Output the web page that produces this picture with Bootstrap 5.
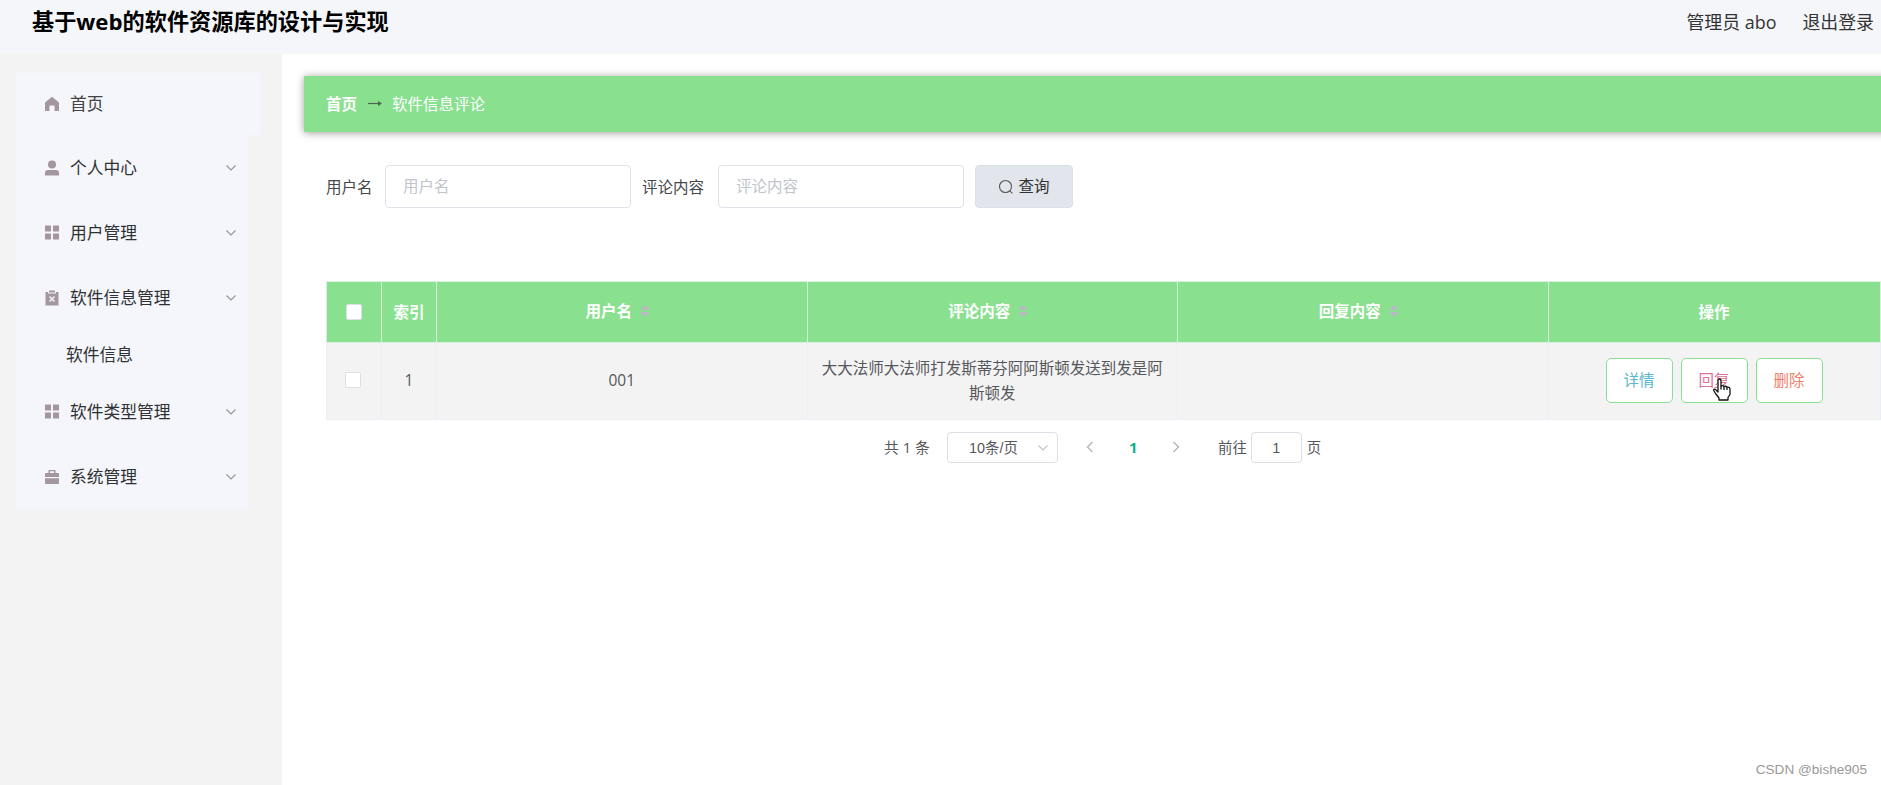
<!DOCTYPE html>
<html lang="zh-CN">
<head>
<meta charset="utf-8">
<meta name="viewport" content="width=device-width, initial-scale=1">
<title>基于web的软件资源库的设计与实现</title>
<link rel="stylesheet" href="https://cdn.jsdelivr.net/npm/bootstrap@5.3.0/dist/css/bootstrap.min.css">
<style>
body{font-family:"Open Sans","Noto Sans CJK SC",sans-serif;font-size:15.5px;line-height:24px;color:#55575b;overflow:hidden;height:785px;background:#fff}
.topbar{height:54px;background:#f4f6fa;padding:0 7px 11px 32px;color:#333}
.topbar h1{font-size:22.2px;line-height:32px;color:#000;font-weight:700}
.topbar .links{font-size:17.9px;gap:26px}
.side{width:282px;height:731px;background:#f3f3f3;padding:19px 0 0 16px}
.menu{width:232px;background:#f4f6fb;font-size:16.75px;color:#303133}
.menu li{height:65px;padding:0 11px 0 28px}
.menu li.home{height:62px;width:244px;background:#f4f6fb;padding-bottom:1px;color:#444}
.menu li.child{height:49px;padding-left:50px}
.menu svg.ico{width:16px;height:16px;fill:#a3969f;margin-right:10px}
.chev{fill:none;stroke:#909399;stroke-width:1.1}
.main{min-width:0;padding:22px 0 0 22px}
.crumbs{height:56px;background:#89e08f;box-shadow:0 1px 8px rgba(0,0,0,.38);padding:0 22px 1px;color:#fff;margin-right:-10px}
.crumbs .arrow{margin:0 7px 0 8px}
.inner{padding:33px 1px 0 22px}
.search{color:#44464a}
.label-user{width:59px}
.label-text{width:76px;margin-left:11px}
.field{width:246px;height:43px;border:1px solid #dfe2e8;border-radius:4px;padding:0 17px 2px;font-size:15.5px}
.field::placeholder{color:#c0c4cc}
.query{width:98px;height:43px;background:#e2e5eb;border:1px solid #dcdfe6;border-radius:4px;font-size:15.5px;color:#333;padding:0;margin-left:11px}
.query:hover{background:#e2e5eb}
.grid-table{table-layout:fixed;width:1554px;margin:73px 0 0;border-collapse:collapse;text-align:center}
.c-sm{width:55px}.c-lg{width:370.500px}.c-end{width:332px}
.grid-table th{background:#89e08f;color:#fff;height:61px;border:1px solid #dcf0e2;padding:0;font-weight:700;vertical-align:middle}
.grid-table td{background:#f3f3f4;height:77px;border:1px solid #ebeef5;padding:0 11px 1px;line-height:25px;vertical-align:middle}
.srt{padding:0 8px 3px 0}
.tri{margin-left:8px}
.tick{width:16px;height:16px;border:1px solid #dcdfe6;border-radius:2px;background:#fff;margin-bottom:3px}
td .tick{margin-right:3px}
.acts{gap:8px}
.act,.act:hover{width:67px;height:45px;border:1px solid #89e08f;border-radius:5px;background:#fff;font-size:15.5px;padding:0}
.act-view,.act-view:hover{color:#5bb7cd}
.act-reply,.act-reply:hover{color:#e0709a}
.act-del,.act-del:hover{color:#ee7f6d}
.pager{font-size:14.4px;padding-left:558px;margin-top:12px;height:31px}
.pager .total{width:63px;padding-bottom:2px;font-size:14.8px}
.pager svg.arr{fill:none;stroke:#b4b8c0;stroke-width:1.5}
.box{height:31px;border:1px solid #dcdfe6;border-radius:4px;font-family:"Liberation Sans","Noto Sans CJK SC",sans-serif}
.box-size{width:111px;padding:0 8px 0 21px}
.box-size svg{fill:none;stroke:#c0c4cc;stroke-width:1.2}
.box-page{width:51px;margin:0 5px 0 4px}
.prev{margin-left:27px}
.cur{color:#13ae8c;width:10px;margin-left:34px;padding-bottom:2px;font-size:15px}
.next{margin-left:32px}
.goto{margin-left:37px}
.hand{left:1712px;top:378px}
.water{right:14px;bottom:3px;font:13.6px/24px "Liberation Sans",sans-serif;color:#999}
</style>
</head>
<body class="position-relative">
<header class="topbar d-flex justify-content-between align-items-center">
  <h1 class="m-0">基于web的软件资源库的设计与实现</h1>
  <div class="links d-flex"><span>管理员 abo</span><span>退出登录</span></div>
</header>
<div class="d-flex">
  <aside class="side flex-shrink-0">
    <ul class="menu list-unstyled m-0">
      <li class="home d-flex align-items-center"><svg class="ico" viewBox="0 0 16 16"><path d="M8 .800 15 6.500v8q0 .500-.500.500H10.500V9.500h-5V15h-4Q1 15 1 14.500v-8z"/></svg>首页</li>
      <li class="d-flex align-items-center"><svg class="ico" viewBox="0 0 16 16"><circle cx="8" cy="4.500" r="4"/><path d="M1 15.500v-2.500q0-3 3-3h8q3 0 3 3v2.500z"/></svg>个人中心<svg class="chev ms-auto" width="12" height="8" viewBox="0 0 12 8"><path d="m1.500 1.500 4.500 4.500 4.500-4.500"/></svg></li>
      <li class="d-flex align-items-center"><svg class="ico" viewBox="0 0 16 16"><path d="M1 .500h6v6H1zM9 .500h6v6H9zM1 8.500h6v6H1zM9 8.500h6v6H9z"/></svg>用户管理<svg class="chev ms-auto" width="12" height="8" viewBox="0 0 12 8"><path d="m1.500 1.500 4.500 4.500 4.500-4.500"/></svg></li>
      <li class="d-flex align-items-center"><svg class="ico" viewBox="0 0 16 16"><path d="M1.500 2H4v1.500h8V2h2.500v13.500h-13zM5 .500h6v2H5z"/><path d="m5.500 6.500 5 5m0-5-5 5" stroke="#f4f6fb" stroke-width="1.500"/></svg>软件信息管理<svg class="chev ms-auto" width="12" height="8" viewBox="0 0 12 8"><path d="m1.500 1.500 4.500 4.500 4.500-4.500"/></svg></li>
      <li class="child d-flex align-items-center">软件信息</li>
      <li class="d-flex align-items-center"><svg class="ico" viewBox="0 0 16 16"><path d="M1 .500h6v6H1zM9 .500h6v6H9zM1 8.500h6v6H1zM9 8.500h6v6H9z"/></svg>软件类型管理<svg class="chev ms-auto" width="12" height="8" viewBox="0 0 12 8"><path d="m1.500 1.500 4.500 4.500 4.500-4.500"/></svg></li>
      <li class="d-flex align-items-center"><svg class="ico" viewBox="0 0 16 16"><path d="M1 8V5q0-1 1-1h2.500V1h7v3H14q1 0 1 1v3zM6 2.300V4h4V2.300zM1 9.300h14V14q0 1-1 1H2q-1 0-1-1z" fill-rule="evenodd"/></svg>系统管理<svg class="chev ms-auto" width="12" height="8" viewBox="0 0 12 8"><path d="m1.500 1.500 4.500 4.500 4.500-4.500"/></svg></li>
    </ul>
  </aside>
  <main class="main flex-grow-1">
    <nav class="crumbs d-flex align-items-center"><b>首页</b><svg class="arrow" width="20" height="10" viewBox="0 0 20 10"><path d="M3 4.500h11" stroke="#4e6652" stroke-width="1.200"/><path d="m13 2 4 2.500-4 2.500z" fill="#4e6652"/></svg><span>软件信息评论</span></nav>
    <div class="inner">
      <form class="search d-flex align-items-center">
        <label class="label-user flex-shrink-0">用户名</label><input class="field form-control flex-shrink-0" placeholder="用户名">
        <label class="label-text flex-shrink-0">评论内容</label><input class="field form-control flex-shrink-0" placeholder="评论内容">
        <button type="button" class="query btn d-flex align-items-center justify-content-center"><svg class="me-1" width="16" height="16" viewBox="0 0 16 16" fill="none" stroke="#555" stroke-width="1.100"><circle cx="7.500" cy="7.500" r="6"/><path d="m11.800 11.800 2.500 2.500"/></svg>查询</button>
      </form>
      <table class="grid-table">
        <colgroup><col class="c-sm"><col class="c-sm"><col class="c-lg"><col class="c-lg"><col class="c-lg"><col class="c-end"></colgroup>
        <thead><tr>
          <th><span class="tick d-inline-block align-middle"></span></th><th>索引</th>
          <th><div class="srt d-flex align-items-center justify-content-center">用户名<svg class="tri" width="10" height="14" viewBox="0 0 10 14"><path d="M0 6 5 1l5 5zM0 8l5 5 5-5z" fill="#b9b9c4"/></svg></div></th>
          <th><div class="srt d-flex align-items-center justify-content-center">评论内容<svg class="tri" width="10" height="14" viewBox="0 0 10 14"><path d="M0 6 5 1l5 5zM0 8l5 5 5-5z" fill="#b9b9c4"/></svg></div></th>
          <th><div class="srt d-flex align-items-center justify-content-center">回复内容<svg class="tri" width="10" height="14" viewBox="0 0 10 14"><path d="M0 6 5 1l5 5zM0 8l5 5 5-5z" fill="#b9b9c4"/></svg></div></th>
          <th>操作</th>
        </tr></thead>
        <tbody><tr>
          <td><span class="tick d-inline-block align-middle"></span></td><td>1</td><td>001</td><td>大大法师大法师打发斯蒂芬阿阿斯顿发送到发是阿斯顿发</td><td></td>
          <td><div class="acts d-flex justify-content-center"><button class="act act-view btn">详情</button><button class="act act-reply btn">回复</button><button class="act act-del btn">删除</button></div></td>
        </tr></tbody>
      </table>
      <div class="pager d-flex align-items-center">
        <span class="total">共 1 条</span>
        <span class="box box-size d-flex align-items-center">10条/页<svg class="ms-auto" width="12" height="8" viewBox="0 0 12 8"><path d="m1.500 1.500 4.500 4.500 4.500-4.500"/></svg></span>
        <svg class="arr prev" width="10" height="14" viewBox="0 0 10 14"><path d="M7.500 1 2.500 6l5 5"/></svg>
        <b class="cur">1</b>
        <svg class="arr next" width="10" height="14" viewBox="0 0 10 14"><path d="m2.500 1 5 5-5 5"/></svg>
        <span class="goto">前往</span><span class="box box-page d-flex align-items-center justify-content-center">1</span><span>页</span>
      </div>
    </div>
  </main>
</div>
<svg class="hand position-absolute" width="20" height="24" viewBox="0 0 20 24" fill="#fff" stroke="#111" stroke-width="1.300" stroke-linejoin="round"><path d="M6 14V2.500q0-1.500 1.500-1.500T9 2.500V8q2-1 3 .5 2-.8 3 .7 3-.5 3 2.300v5l-2 3v2.500H7V20l-3.500-4.500-2-3.500q1-1.800 3 .5z"/><path d="M9 8v3.500m3-3v3.500m3-2.800V12" fill="none"/></svg>
<div class="water position-absolute">CSDN @bishe905</div>
<script src="https://cdn.jsdelivr.net/npm/bootstrap@5.3.0/dist/js/bootstrap.bundle.min.js"></script>
</body>
</html>
